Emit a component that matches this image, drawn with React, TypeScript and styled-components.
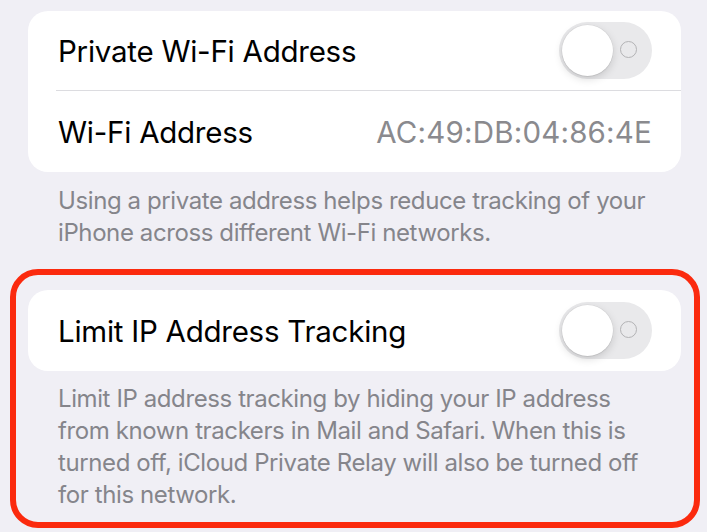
import styled, { createGlobalStyle } from "styled-components";

const GlobalStyle = createGlobalStyle`
  html, body {
    margin: 0;
    padding: 0;
    background: #f0eff5;
  }
  body {
    font-family: Inter, "Noto Sans", "Liberation Sans", sans-serif;
    -webkit-font-smoothing: antialiased;
  }
`;

const Page = styled.div`
  width: 707px;
  height: 532px;
  box-sizing: border-box;
  padding: 11px 7px 0 10px;
  overflow: hidden;
`;

const Section = styled.div`
  padding: 0 19px 0 18px;
`;

const Card = styled.div`
  background: #ffffff;
  border-radius: 20px;
  overflow: hidden;
`;

const Row = styled.div<{ $divider?: boolean }>`
  height: ${(p) => (p.$divider ? "79px" : "81px")};
  display: flex;
  align-items: center;
  justify-content: space-between;
  margin-left: ${(p) => (p.$divider ? "28px" : "0")};
  padding: 0 29px 0 ${(p) => (p.$divider ? "2px" : "30px")};
  border-bottom: ${(p) => (p.$divider ? "1px solid #dcdce0" : "none")};
`;

const Label = styled.span`
  font-size: 29.5px;
  letter-spacing: -0.25px;
  color: #000000;
`;

const Value = styled.span`
  font-size: 29.5px;
  letter-spacing: 0.2px;
  color: #8a8a8e;
`;

const Footnote = styled.p<{ $gap: number }>`
  margin: ${(p) => p.$gap}px 0 0;
  padding: 0 22px 0 30px;
  font-size: 24px;
  line-height: 32px;
  letter-spacing: -0.4px;
  color: #85858b;
`;

const Highlight = styled.div`
  margin-top: 20px;
  width: 690px;
  height: 259px;
  box-sizing: border-box;
  border: 6px solid #fb2a0e;
  border-radius: 28px;
  padding: 15px 13px 0 12px;
`;

const Track = styled.div`
  position: relative;
  width: 93px;
  height: 57px;
  border-radius: 29px;
  background: #e9e9eb;
  flex-shrink: 0;
`;

const Knob = styled.div`
  position: absolute;
  left: 3px;
  top: 3px;
  width: 51px;
  height: 51px;
  border-radius: 50%;
  background: #ffffff;
  box-shadow: 0 3px 8px rgba(0, 0, 0, 0.15), 0 1px 1px rgba(0, 0, 0, 0.06),
    0 0 0 0.5px rgba(0, 0, 0, 0.06);
`;

const OffMark = styled.div`
  position: absolute;
  left: 61px;
  top: 19px;
  width: 15px;
  height: 15px;
  border-radius: 50%;
  border: 1.6px solid #b3b3b5;
`;

const Toggle = () => (
  <Track>
    <OffMark />
    <Knob />
  </Track>
);

export default function App() {
  return (
    <>
      <GlobalStyle />
      <Page>
        <Section>
          <Card>
            <Row $divider>
              <Label>Private Wi-Fi Address</Label>
              <Toggle />
            </Row>
            <Row>
              <Label>Wi-Fi Address</Label>
              <Value>AC:49:DB:04:86:4E</Value>
            </Row>
          </Card>
          <Footnote $gap={13}>
            Using a private address helps reduce tracking of your iPhone
            across different Wi-Fi networks.
          </Footnote>
        </Section>
        <Highlight>
          <Card>
            <Row>
              <Label>Limit IP Address Tracking</Label>
              <Toggle />
            </Row>
          </Card>
          <Footnote $gap={12}>
            Limit IP address tracking by hiding your IP address from known
            trackers in Mail and Safari. When this is turned off, iCloud
            Private Relay will also be turned off for this network.
          </Footnote>
        </Highlight>
      </Page>
    </>
  );
}
